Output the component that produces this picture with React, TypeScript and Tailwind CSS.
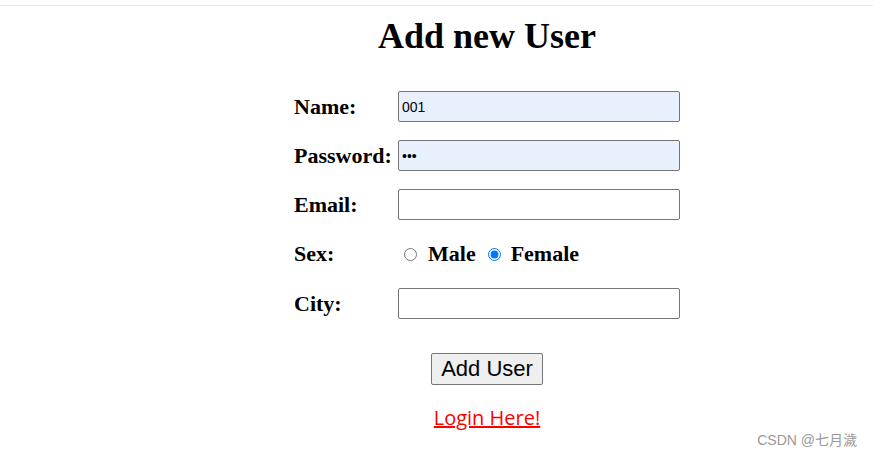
import React from "react";

const serif = { fontFamily: '"Liberation Serif", "Times New Roman", serif' };

function Row({ label, children, tall }: { label: string; children: React.ReactNode; tall?: boolean }) {
  return (
    <div className={tall ? "flex h-[32px] items-center" : "flex h-[31px] items-center"}>
      <div className="w-[104px] text-[22px] font-bold leading-none text-black" style={serif}>
        {label}
      </div>
      {children}
    </div>
  );
}

const inputCls =
  "h-[31px] w-[282px] rounded-[2px] border border-[#767676] px-[3px] text-[14px] text-black outline-none";

export default function App() {
  return (
    <div className="relative h-[459px] w-[873px] overflow-hidden bg-white">
      <div className="mt-[5px] border-t border-[#e5e5e5]" />
      <div className="flex flex-col items-center pl-[101px]">
        <h1 className="mt-[10px] text-[36px] font-bold leading-[40px] text-black" style={serif}>
          Add new User
        </h1>
        <div className="mt-[35px] flex w-[386px] flex-col gap-[18px]">
          <Row label="Name:">
            <input
              className={inputCls + " bg-[#e8f0fe]"}
              style={{ fontFamily: '"Liberation Sans", Arial, sans-serif' }}
              defaultValue="001"
            />
          </Row>
          <Row label="Password:">
            <input
              type="password"
              className={inputCls + " bg-[#e8f0fe]"}
              style={{ fontFamily: '"Liberation Sans", Arial, sans-serif' }}
              defaultValue="123"
            />
          </Row>
          <Row label="Email:">
            <input className={inputCls + " bg-white"} />
          </Row>
          <Row label="Sex:" tall>
            <div className="flex items-center text-[22px] font-bold leading-none text-black" style={serif}>
              <input type="radio" name="sex" className="ml-[6px] mr-[11px] h-[13px] w-[13px]" />
              <span>Male</span>
              <input type="radio" name="sex" defaultChecked className="ml-[12px] mr-[10px] h-[13px] w-[13px] accent-[#0075ff]" />
              <span>Female</span>
            </div>
          </Row>
          <Row label="City:">
            <input className={inputCls + " bg-white"} />
          </Row>
        </div>
        <button
          className="mt-[34px] h-[32px] rounded-[2px] border border-[#767676] bg-[#efefef] px-[9px] text-[22px] leading-none text-black"
          style={{ fontFamily: '"Liberation Sans", Arial, sans-serif' }}
        >
          Add User
        </button>
        <a
          href="#"
          className="mt-[19px] text-[20px] leading-[28px] text-[#ff0000] underline"
          style={{ fontFamily: '"Open Sans", "Noto Sans", sans-serif' }}
        >
          Login Here!
        </a>
      </div>
      <div
        className="absolute bottom-[8px] right-[16px] text-[14px] text-[#999999]"
        style={{ fontFamily: '"Liberation Sans", Arial, "Noto Sans CJK SC", sans-serif' }}
      >
        CSDN @七月濊
      </div>
    </div>
  );
}
